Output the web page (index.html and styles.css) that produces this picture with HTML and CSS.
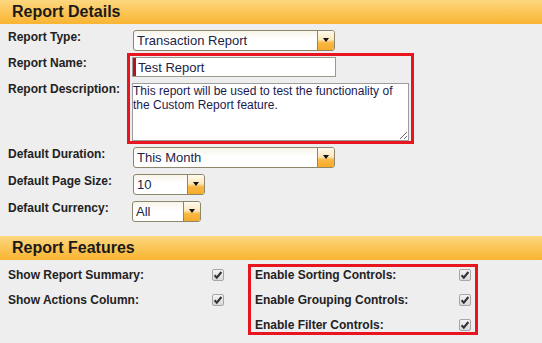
FILE: index.html
```html
<!DOCTYPE html>
<html lang="en">
<head>
    <meta charset="UTF-8">
    <title>Report Details</title>
    <link rel="stylesheet" href="styles.css">
</head>
<body>

<!-- Report Details -->
<div class="section-title">Report Details</div>
<div class="details">
    <div class="row">
        <label>Report Type:</label>
        <div class="select wide">
            <select><option>Transaction Report</option></select>
            <span class="arrow"></span>
        </div>
    </div>

    <div class="row group">
        <div class="group-labels">
            <label class="name-label">Report Name:</label>
            <label>Report Description:</label>
        </div>
        <div class="highlight">
            <input type="text" class="required" value="Test Report">
            <textarea>This report will be used to test the functionality of the Custom Report feature.</textarea>
        </div>
    </div>

    <div class="row after-group">
        <label>Default Duration:</label>
        <div class="select wide">
            <select><option>This Month</option></select>
            <span class="arrow"></span>
        </div>
    </div>

    <div class="row">
        <label>Default Page Size:</label>
        <div class="select size">
            <select><option>10</option></select>
            <span class="arrow"></span>
        </div>
    </div>

    <div class="row">
        <label>Default Currency:</label>
        <div class="select currency">
            <select><option>All</option></select>
            <span class="arrow"></span>
        </div>
    </div>
</div>

<!-- Report Features -->
<div class="section-title features-title">Report Features</div>
<div class="features">
    <div class="feature-col">
        <div class="feature">
            <label>Show Report Summary:</label>
            <span class="check"><svg width="12" height="12" viewBox="0 0 12 12"><path d="M2.6 6.2 L4.8 8.6 L9.4 3" fill="none" stroke="#333" stroke-width="2.1"/></svg></span>
        </div>
        <div class="feature">
            <label>Show Actions Column:</label>
            <span class="check"><svg width="12" height="12" viewBox="0 0 12 12"><path d="M2.6 6.2 L4.8 8.6 L9.4 3" fill="none" stroke="#333" stroke-width="2.1"/></svg></span>
        </div>
    </div>

    <div class="feature-col highlight">
        <div class="feature">
            <label>Enable Sorting Controls:</label>
            <span class="check"><svg width="12" height="12" viewBox="0 0 12 12"><path d="M2.6 6.2 L4.8 8.6 L9.4 3" fill="none" stroke="#333" stroke-width="2.1"/></svg></span>
        </div>
        <div class="feature">
            <label>Enable Grouping Controls:</label>
            <span class="check"><svg width="12" height="12" viewBox="0 0 12 12"><path d="M2.6 6.2 L4.8 8.6 L9.4 3" fill="none" stroke="#333" stroke-width="2.1"/></svg></span>
        </div>
        <div class="feature">
            <label>Enable Filter Controls:</label>
            <span class="check"><svg width="12" height="12" viewBox="0 0 12 12"><path d="M2.6 6.2 L4.8 8.6 L9.4 3" fill="none" stroke="#333" stroke-width="2.1"/></svg></span>
        </div>
    </div>
</div>

</body>
</html>
```

FILE: styles.css
```css
body {
    font-family: "Liberation Sans", Arial, sans-serif;
    margin: 0;
    padding: 0;
    background-color: #eeeeee;
    color: #222;
}

.section-title {
    height: 24px;
    line-height: 24px;
    padding-left: 12px;
    font-size: 16px;
    font-weight: bold;
    color: #1a1a1a;
    background: linear-gradient(#fcd77f, #f9b431);
}

.features-title {
    margin-top: 14px;
}

.details {
    padding: 6px 8px 0;
}

.row {
    display: flex;
    margin-bottom: 6px;
}

.row label,
.feature label {
    font-size: 12px;
    font-weight: bold;
    line-height: 14px;
}

.row > label {
    width: 125px;
    flex-shrink: 0;
}

.row.group {
    margin-top: -4px;
    margin-bottom: 3px;
}

.group-labels {
    width: 119px;
    display: flex;
    flex-direction: column;
    padding-top: 3px;
}

.group-labels .name-label {
    height: 26px;
}

.highlight {
    border: 3px solid #e8141f;
}

.details .highlight {
    display: flex;
    flex-direction: column;
    gap: 6px;
    padding: 1px 2px 0;
}

/* select boxes */
.select {
    display: flex;
    height: 21px;
    box-sizing: border-box;
    border: 1px solid #8c876a;
    border-radius: 3px;
    background: linear-gradient(#f8f4ea, #fff 45%);
    overflow: hidden;
}

.select.wide {
    width: 202px;
}

.select.size {
    width: 72px;
}

.select.currency {
    width: 69px;
    margin-left: -1px;
}

.select select {
    appearance: none;
    -webkit-appearance: none;
    flex: 1;
    min-width: 0;
    border: none;
    background: transparent;
    padding: 0 0 0 3px;
    margin: 0;
    font-family: "Liberation Sans", Arial, sans-serif;
    font-size: 13px;
    color: #1c2448;
    outline: none;
}

.select .arrow {
    width: 16px;
    flex-shrink: 0;
    border-left: 1px solid #8c876a;
    background: linear-gradient(#fffaf0 0%, #fde8bd 45%, #f9b843 62%, #f7ab2a 100%);
    display: flex;
    align-items: center;
    justify-content: center;
}

.select .arrow::after {
    content: "";
    border-top: 4px solid #111;
    border-left: 3.5px solid transparent;
    border-right: 3.5px solid transparent;
    margin-top: -1px;
}

/* text fields */
input.required {
    width: 204px;
    height: 20px;
    box-sizing: border-box;
    margin: 0;
    border: 1px solid #9b9a8c;
    box-shadow: inset 3px 0 0 #b0122e;
    padding: 0 0 0 5px;
    font-family: "Liberation Sans", Arial, sans-serif;
    font-size: 13px;
    color: #1c2448;
    background: #fff;
    outline: none;
}

textarea {
    width: 277px;
    height: 58px;
    box-sizing: border-box;
    margin: 0;
    border: 1px solid #9d9d9d;
    padding: 0;
    font-family: "Liberation Sans", Arial, sans-serif;
    font-size: 12px;
    color: #1a1a50;
    background: #fff;
    outline: none;
}

/* features */
.features {
    display: flex;
    align-items: flex-start;
    gap: 24px;
    padding-left: 8px;
    margin-top: 4px;
}

.feature-col {
    display: flex;
    flex-direction: column;
    gap: 11px;
    padding-top: 4px;
}

.feature-col.highlight {
    padding: 1px 4px 0;
}

.feature {
    display: flex;
    align-items: center;
    height: 14px;
}

.feature label {
    width: 204px;
}

.check {
    width: 12px;
    height: 12px;
    box-sizing: border-box;
    border: 1px solid #a6a6a6;
    border-radius: 2px;
    background: linear-gradient(#f4f4f4, #d9d9d9);
    display: flex;
    align-items: center;
    justify-content: center;
}

.check svg {
    display: block;
    margin: -1px;
}
```
